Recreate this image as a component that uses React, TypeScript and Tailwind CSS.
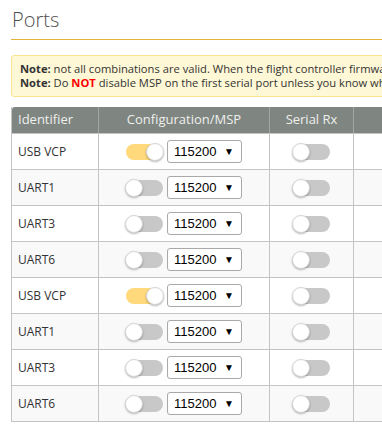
import React from "react";

type Port = {
  id: string;
  msp: boolean;
  baud: string;
};

const ports: Port[] = [
  { id: "USB VCP", msp: true, baud: "115200" },
  { id: "UART1", msp: false, baud: "115200" },
  { id: "UART3", msp: false, baud: "115200" },
  { id: "UART6", msp: false, baud: "115200" },
  { id: "USB VCP", msp: true, baud: "115200" },
  { id: "UART1", msp: false, baud: "115200" },
  { id: "UART3", msp: false, baud: "115200" },
  { id: "UART6", msp: false, baud: "115200" },
];

// small switch, same look as the configurator's
function Toggle({ on }: { on: boolean }) {
  return (
    <div
      className={`relative w-[37px] h-[16px] rounded-full shrink-0 ${
        on ? "bg-[#ffd97c]" : "bg-[#c8c8c8]"
      }`}
    >
      <div
        className={`absolute top-[-1px] w-[18px] h-[18px] rounded-full bg-white border border-[#d6d6d6] shadow-[0_1px_2px_rgba(0,0,0,0.3)] ${
          on ? "right-[-1px]" : "left-[-1px]"
        }`}
      />
    </div>
  );
}

function BaudSelect({ value }: { value: string }) {
  return (
    <div className="w-[75px] h-[23px] flex items-center justify-between pl-[6px] pr-[7px] bg-white border border-[#a9a9a9] rounded-[3px] font-['Liberation_Sans',Arial,sans-serif] text-[13px] text-black">
      <span>{value}</span>
      <span className="text-[10px]">▼</span>
    </div>
  );
}

export default function App() {
  return (
    <div className="w-[382px] h-[447px] overflow-hidden bg-white font-['Open_Sans',sans-serif] text-[#333]">
      <div className="w-[700px] pl-[11px]">
        {/* Title */}
        <div className="pt-[8px] pb-[7px] border-b border-[#e4b53b]">
          <h1 className="pl-[1px] text-[20px] leading-[24px] font-light text-[#4f4f4f]">
            Ports
          </h1>
        </div>

        {/* Notes */}
        <div className="mt-[15px] px-[8px] py-[6px] bg-[#fff8d6] border border-[#fde38c] rounded-[3px] text-[11.2px] leading-[14px] text-[#333] whitespace-nowrap">
          <p>
            <b>Note:</b> not all combinations are valid. When the flight controller
            firmware detects this the serial port configuration will be reset.
          </p>
          <p>
            <b>Note:</b> Do <b className="text-[#f00]">NOT</b> disable MSP on the first
            serial port unless you know what you are doing.
          </p>
        </div>

        {/* Table */}
        <div className="mt-[10px] border-l border-[#c4c4c4] text-[12px]">
          <div className="flex h-[27px] bg-[#7f8580] text-[#eef0ee] text-[13px] rounded-tl-[3px] border-b border-[#c4c4c4]">
            <div className="w-[87px] pl-[6px] flex items-center border-r border-[#a3a7a4]">
              Identifier
            </div>
            <div className="w-[171px] flex items-center justify-center border-r border-[#a3a7a4]">
              Configuration/MSP
            </div>
            <div className="w-[84px] flex items-center justify-center border-r border-[#a3a7a4]">
              Serial Rx
            </div>
            <div className="w-[300px]" />
          </div>

          {ports.map((p, i) => (
            <div
              key={i}
              className={`flex h-[36px] border-b border-[#c4c4c4] ${
                i % 2 === 1 ? "bg-[#f9f9f9]" : "bg-white"
              }`}
            >
              <div className="w-[87px] pl-[6px] flex items-center border-r border-[#c4c4c4]">
                {p.id}
              </div>
              <div className="w-[171px] flex items-center justify-center gap-[4px] border-r border-[#c4c4c4]">
                <Toggle on={p.msp} />
                <BaudSelect value={p.baud} />
              </div>
              <div className="w-[84px] flex items-center justify-center border-r border-[#c4c4c4]">
                <Toggle on={false} />
              </div>
              <div className="w-[300px]" />
            </div>
          ))}
        </div>
      </div>
    </div>
  );
}
